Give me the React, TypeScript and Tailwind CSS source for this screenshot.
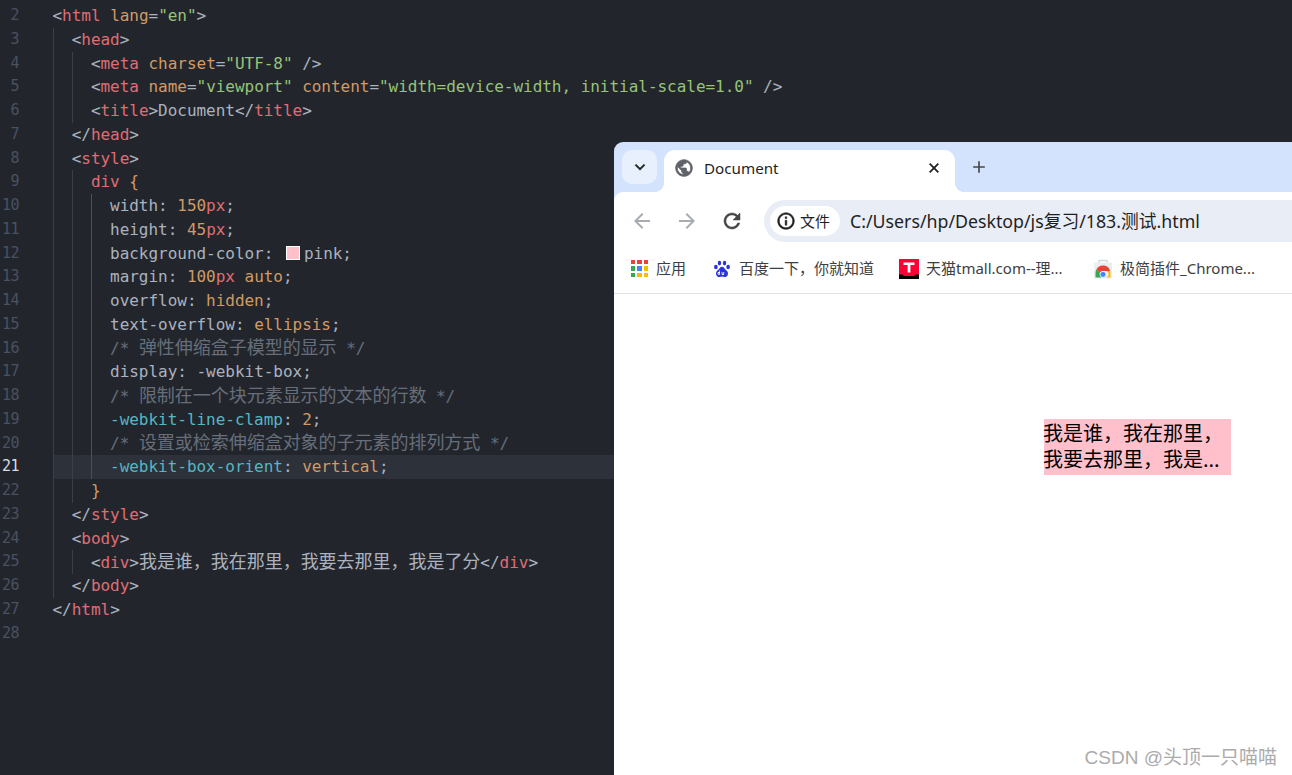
import React from "react";

type Tok = [string, string];
const R = "text-[#e06c75]", O = "text-[#d19a66]", G = "text-[#98c379]", P = "text-[#abb2bf]", C = "text-[#676e7b]", T = "text-[#56b6c2]";

const lines: { n: number; lvl: number; toks: Tok[] }[] = [
  { n: 2, lvl: 0, toks: [["<", P], ["html", R], [" lang", O], ["=", P], ['"en"', G], [">", P]] },
  { n: 3, lvl: 1, toks: [["<", P], ["head", R], [">", P]] },
  { n: 4, lvl: 2, toks: [["<", P], ["meta", R], [" charset", O], ["=", P], ['"UTF-8"', G], [" />", P]] },
  { n: 5, lvl: 2, toks: [["<", P], ["meta", R], [" name", O], ["=", P], ['"viewport"', G], [" content", O], ["=", P], ['"width=device-width, initial-scale=1.0"', G], [" />", P]] },
  { n: 6, lvl: 2, toks: [["<", P], ["title", R], [">", P], ["Document", P], ["</", P], ["title", R], [">", P]] },
  { n: 7, lvl: 1, toks: [["</", P], ["head", R], [">", P]] },
  { n: 8, lvl: 1, toks: [["<", P], ["style", R], [">", P]] },
  { n: 9, lvl: 2, toks: [["div", R], [" {", O]] },
  { n: 10, lvl: 3, toks: [["width", P], [": ", P], ["150", O], ["px", R], [";", P]] },
  { n: 11, lvl: 3, toks: [["height", P], [": ", P], ["45", O], ["px", R], [";", P]] },
  { n: 12, lvl: 3, toks: [["background-color", P], [": ", P], ["SWATCH", ""], ["pink", P], [";", P]] },
  { n: 13, lvl: 3, toks: [["margin", P], [": ", P], ["100", O], ["px", R], [" auto", O], [";", P]] },
  { n: 14, lvl: 3, toks: [["overflow", P], [": ", P], ["hidden", O], [";", P]] },
  { n: 15, lvl: 3, toks: [["text-overflow", P], [": ", P], ["ellipsis", O], [";", P]] },
  { n: 16, lvl: 3, toks: [["/* ", C], ["弹性伸缩盒子模型的显示", C], [" */", C]] },
  { n: 17, lvl: 3, toks: [["display", P], [": ", P], ["-webkit-box", P], [";", P]] },
  { n: 18, lvl: 3, toks: [["/* ", C], ["限制在一个块元素显示的文本的行数", C], [" */", C]] },
  { n: 19, lvl: 3, toks: [["-webkit-line-clamp", T], [": ", P], ["2", O], [";", P]] },
  { n: 20, lvl: 3, toks: [["/* ", C], ["设置或检索伸缩盒对象的子元素的排列方式", C], [" */", C]] },
  { n: 21, lvl: 3, toks: [["-webkit-box-orient", T], [": ", P], ["vertical", O], [";", P]] },
  { n: 22, lvl: 2, toks: [["}", O]] },
  { n: 23, lvl: 1, toks: [["</", P], ["style", R], [">", P]] },
  { n: 24, lvl: 1, toks: [["<", P], ["body", R], [">", P]] },
  { n: 25, lvl: 2, toks: [["<", P], ["div", R], [">", P], ["我是谁，我在那里，我要去那里，我是了分", P], ["</", P], ["div", R], [">", P]] },
  { n: 26, lvl: 1, toks: [["</", P], ["body", R], [">", P]] },
  { n: 27, lvl: 0, toks: [["</", P], ["html", R], [">", P]] },
  { n: 28, lvl: 0, toks: [] },
];

function Code() {
  return (
    <div className="pt-[4px] font-['DejaVu_Sans_Mono','Noto_Sans_CJK_SC',monospace] text-[16px] tracking-[-0.03px]">
      {lines.map((l) => (
        <div key={l.n} className="flex h-[23.76px] items-center leading-[23.76px] whitespace-pre">
          <span className={`w-[19px] shrink-0 text-right text-[15px] tracking-[-0.5px] ${l.n === 21 ? "text-[#d7dae0]" : "text-[#495162]"}`}>{l.n}</span>
          <span className="w-[33.5px] shrink-0" />
          <div className={`flex h-full flex-1 items-center ${l.n === 21 ? "bg-[#2c313a]" : ""}`}>
            {Array.from({ length: l.lvl }).map((_, i) => (
              <span key={i} className={`h-full w-[19.2px] shrink-0 border-l ${l.n >= 10 && l.n <= 21 && i === 2 ? "border-[#4b4f56]" : "border-[#3b4048]"}`} />
            ))}
            <span>
              {l.toks.map(([t, c], i) =>
                t === "SWATCH" ? (
                  <span key={i} className="ml-[3px] mr-[4px] inline-block h-[14px] w-[14px] border border-white bg-[#ffc0cb] align-[-1px]" />
                ) : /[\u4e00-\u9fff]/.test(t) ? (
                  <span key={i} className={`text-[18px] ${c}`}>{t}</span>
                ) : (
                  <span key={i} className={c}>{t}</span>
                )
              )}
            </span>
          </div>
        </div>
      ))}
    </div>
  );
}

function Mat({ d, className }: { d: string; className: string }) {
  return (
    <svg viewBox="0 0 24 24" className={className} fill="currentColor">
      <path d={d} />
    </svg>
  );
}

function Apps() {
  const cols = ["#ea4335", "#ea4335", "#ea4335", "#34a853", "#4285f4", "#fbbc05", "#34a853", "#fbbc05", "#fbbc05"];
  return (
    <span className="grid h-[17px] w-[17px] grid-cols-3 gap-[2px]">
      {cols.map((c, i) => (
        <span key={i} className="block" style={{ background: c }} />
      ))}
    </span>
  );
}

function Baidu() {
  return (
    <svg viewBox="0 0 20 20" className="h-[18px] w-[18px]" fill="#2932e1">
      <ellipse cx="7.2" cy="3.4" rx="1.9" ry="2.6" />
      <ellipse cx="12.8" cy="3.4" rx="1.9" ry="2.6" />
      <ellipse cx="3.2" cy="7.8" rx="2" ry="2.5" />
      <ellipse cx="16.8" cy="7.8" rx="2" ry="2.5" />
      <path d="M10 7.6c-2 0-2.6 2-4 3.2-1.5 1.2-3 2.6-2.6 4.9.4 2.2 2.2 3.3 4 3.1 1-.1 1.7-.4 2.6-.4s1.7.3 2.6.4c1.9.2 3.6-.9 4-3.1.4-2.3-1.1-3.7-2.6-4.9-1.4-1.2-2-3.2-4-3.2z" />
      <path d="M7.8 11.8v4.6H6.4c-.9 0-1.4-.7-1.4-1.5s.6-1.5 1.5-1.5h.5v-1.6zM6.9 14.4h-.3c-.4 0-.6.2-.6.5s.2.6.6.6h.3zM10.5 13.2v2.2c0 .3.2.5.5.5s.5-.2.5-.5v-2.2h.9v2.3c0 .7-.5 1.1-1.4 1.1s-1.4-.4-1.4-1.1v-2.3z" fill="#fff" />
    </svg>
  );
}

function Tmall() {
  return (
    <svg viewBox="0 0 20 20" className="h-[20px] w-[20px]">
      <rect width="20" height="20" fill="#ff0036" />
      <path d="M0 15.5h3.5l1.5 1.5h10l1.5-1.5H20V20H0z" fill="#000" />
      <path d="M4.5 3.5h11v2.6h-4.1v7.4H8.6V6.1H4.5z" fill="#fff" />
    </svg>
  );
}

function Store() {
  return (
    <svg viewBox="0 0 20 20" className="h-[20px] w-[20px]">
      <path d="M1 3.5h18v16H1z" fill="#eceff1" />
      <path d="M6 3.5V1.5h8v2" fill="none" stroke="#cfd8dc" strokeWidth="1.3" />
      <path d="M2.5 18.5V14a7.5 7.5 0 0 1 1-3.8L7 14.8l1.5 3.7z" fill="#34a853" />
      <path d="M3.5 10.2A7.5 7.5 0 0 1 17.2 12H10a3 3 0 0 0-3 2.8z" fill="#ea4335" />
      <path d="M17.2 12a7.5 7.5 0 0 1 .3 2.5v4h-4.2a3.4 3.4 0 0 0 0-6.5z" fill="#fbbc05" />
      <circle cx="10" cy="15.4" r="3" fill="#4285f4" stroke="#fff" strokeWidth=".8" />
    </svg>
  );
}

function Mark({ icon, text, w }: { icon: React.ReactNode; text: string; w: string }) {
  return (
    <div className={`flex items-center ${w}`}>
      {icon}
      <span className="whitespace-pre text-[15px] text-[#3c4043]">{text}</span>
    </div>
  );
}

function Browser() {
  return (
    <div className="absolute left-[614px] top-[142px] flex h-[633px] w-[678px] flex-col overflow-hidden rounded-tl-[9px] bg-[#d3e3fd] font-['Noto_Sans','Noto_Sans_CJK_SC',sans-serif]">
      <div className="flex h-[50px] shrink-0 pl-[8px] pt-[8px]">
        <div className="flex h-[34px] w-[35px] items-center justify-center rounded-[10px] bg-[#e8f0fe] text-[#1f1f1f]">
          <Mat d="M7.41 8.59 12 13.17l4.59-4.58L18 10l-6 6-6-6z" className="h-[20px] w-[20px] stroke-current stroke-[0.5]" />
        </div>
        <div className="relative ml-[7px] flex h-[42px] w-[291px] items-center rounded-t-[11px] bg-white pb-[6px] pl-[10px] pr-[13px]">
          <Mat d="M12 2C6.48 2 2 6.48 2 12s4.48 10 10 10 10-4.48 10-10S17.52 2 12 2zm-1 17.93c-3.95-.49-7-3.85-7-7.93 0-.62.08-1.21.21-1.79L9 15v1c0 1.1.9 2 2 2v1.93zm6.9-2.54c-.26-.81-1-1.39-1.9-1.39h-1v-3c0-.55-.45-1-1-1H8v-2h2c.55 0 1-.45 1-1V7h2c1.1 0 2-.9 2-2v-.41c2.93 1.19 5 4.06 5 7.41 0 2.08-.8 3.97-2.1 5.39z" className="h-[20px] w-[20px] stroke-current stroke-[0.9] text-[#5f6368]" />
          <span className="ml-[10px] flex-1 text-[15.2px] text-[#1f1f1f]">Document</span>
          <Mat d="M19 6.41 17.59 5 12 10.59 6.41 5 5 6.41 10.59 12 5 17.59 6.41 19 12 13.41 17.59 19 19 17.59 13.41 12z" className="h-[16px] w-[16px] stroke-current stroke-[0.8] text-[#1f1f1f]" />
          <span className="absolute bottom-0 left-[-10px] h-[10px] w-[10px] bg-[radial-gradient(circle_at_0_0,#d3e3fd_10px,#fff_10.5px)]" />
          <span className="absolute bottom-0 right-[-10px] h-[10px] w-[10px] bg-[radial-gradient(circle_at_100%_0,#d3e3fd_10px,#fff_10.5px)]" />
        </div>
        <div className="ml-[14px] flex h-[34px] items-center">
          <Mat d="M19 13h-6v6h-2v-6H5v-2h6V5h2v6h6v2z" className="h-[20px] w-[20px] text-[#474747]" />
        </div>
      </div>

      <div className="flex h-[58px] shrink-0 items-center rounded-tl-[9px] bg-white pl-[16px]">
        <Mat d="M20 11H7.83l5.59-5.59L12 4l-8 8 8 8 1.41-1.41L7.83 13H20v-2z" className="h-[24px] w-[24px] text-[#a8abaf]" />
        <Mat d="M12 4l-1.41 1.41L16.17 11H4v2h12.17l-5.58 5.59L12 20l8-8z" className="ml-[21px] h-[24px] w-[24px] text-[#a8abaf]" />
        <Mat d="M17.65 6.35C16.2 4.9 14.21 4 12 4c-4.42 0-7.99 3.58-7.99 8s3.57 8 7.99 8c3.73 0 6.84-2.55 7.73-6h-2.08c-.82 2.33-3.04 4-5.65 4-3.31 0-6-2.69-6-6s2.69-6 6-6c1.66 0 3.14.69 4.22 1.78L13 11h7V4l-2.35 2.35z" className="ml-[21px] h-[24px] w-[24px] stroke-current stroke-[0.5] text-[#474747]" />
        <div className="ml-[20px] flex h-[42px] flex-1 items-center rounded-l-[21px] bg-[#e9edf6] pl-[6px]">
          <div className="flex h-[30px] w-[70px] items-center rounded-[15px] bg-white pl-[6px]">
            <Mat d="M11 7h2v2h-2zm0 4h2v6h-2zm1-9C6.48 2 2 6.48 2 12s4.48 10 10 10 10-4.48 10-10S17.52 2 12 2zm0 18c-4.41 0-8-3.59-8-8s3.59-8 8-8 8 3.59 8 8-3.59 8-8 8z" className="h-[20px] w-[20px] stroke-current stroke-[0.6] text-[#1f1f1f]" />
            <span className="ml-[4px] text-[15px] text-[#1f1f1f]">文件</span>
          </div>
          <span className="ml-[10px] whitespace-pre text-[17.75px] text-[#1f1f1f]">C:/Users/hp/Desktop/js复习/183.测试.html</span>
        </div>
      </div>

      <div className="flex h-[44px] shrink-0 items-center border-b border-[#e3e3e3] bg-white pb-[6px] pl-[17px]">
        <Mark w="w-[82px]" icon={<span className="mr-[8px]"><Apps /></span>} text="应用" />
        <Mark w="w-[186px]" icon={<span className="mr-[8px]"><Baidu /></span>} text="百度一下，你就知道" />
        <Mark w="w-[194px]" icon={<span className="mr-[7px]"><Tmall /></span>} text="天猫tmall.com--理..." />
        <Mark w="w-[180px]" icon={<span className="mr-[7px]"><Store /></span>} text="极简插件_Chrome..." />
      </div>

      <div className="flex-1 bg-white pl-[430px] pt-[125px] font-['Noto_Sans_CJK_SC',sans-serif]">
        <div className="h-[56px] w-[187px] bg-[#ffc0cb] pt-[1px] text-[20px] leading-[26px] text-black">
          <div className="ml-[-1px]">
            我是谁，我在那里，<br />我要去那里，我是...
          </div>
        </div>
      </div>
    </div>
  );
}

export default function App() {
  return (
    <div className="relative h-[775px] w-[1292px] overflow-hidden bg-[#22262c]">
      <Code />
      <Browser />
      <div className="absolute bottom-[3px] right-[15px] font-['Liberation_Sans','Noto_Sans_CJK_SC',sans-serif] text-[19px] text-[#ababab]">CSDN @头顶一只喵喵</div>
    </div>
  );
}
